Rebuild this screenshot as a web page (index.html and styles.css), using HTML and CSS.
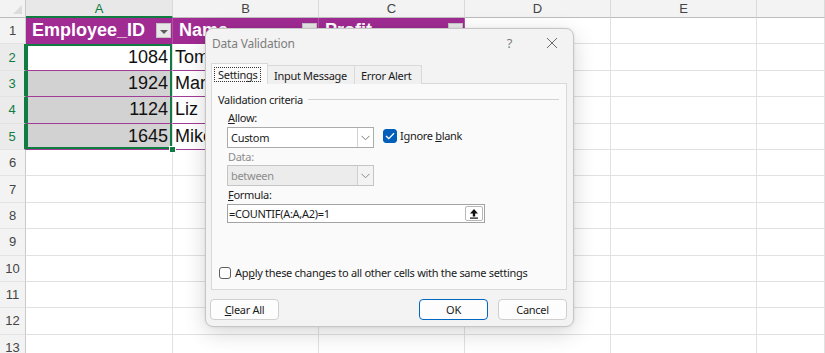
FILE: index.html
```html
<!DOCTYPE html>
<html lang="en">

<head>
    <meta charset="UTF-8">
    <meta name="viewport" content="width=device-width, initial-scale=1.0">
    <title>Data Validation</title>
    <link rel="stylesheet" href="styles.css">
</head>

<body>
    <div class="sheet">
        <div class="corner"></div>
        <div class="colhead active">A</div>
        <div class="colhead">B</div>
        <div class="colhead">C</div>
        <div class="colhead">D</div>
        <div class="colhead">E</div>
        <div class="colhead last"></div>

        <div class="rowhead">1</div>
        <div class="cell th"><span>Employee_ID</span><span class="filter"></span></div>
        <div class="cell th"><span>Name</span><span class="filter"></span></div>
        <div class="cell th"><span>Profit</span><span class="filter"></span></div>
        <div class="cell"></div>
        <div class="cell"></div>
        <div class="cell"></div>

        <div class="rowhead sel">2</div>
        <div class="cell tb num pick first">1084</div>
        <div class="cell tb">Tom</div>
        <div class="cell tb"></div>
        <div class="cell"></div>
        <div class="cell"></div>
        <div class="cell"></div>

        <div class="rowhead sel">3</div>
        <div class="cell tb num pick shade">1924</div>
        <div class="cell tb">Mary</div>
        <div class="cell tb"></div>
        <div class="cell"></div>
        <div class="cell"></div>
        <div class="cell"></div>

        <div class="rowhead sel">4</div>
        <div class="cell tb num pick shade">1124</div>
        <div class="cell tb">Liz</div>
        <div class="cell tb"></div>
        <div class="cell"></div>
        <div class="cell"></div>
        <div class="cell"></div>

        <div class="rowhead sel">5</div>
        <div class="cell tb num pick shade end">1645<span class="handle"></span></div>
        <div class="cell tb">Mike</div>
        <div class="cell tb"></div>
        <div class="cell"></div>
        <div class="cell"></div>
        <div class="cell"></div>

        <div class="rowhead">6</div>
        <div class="cell"></div><div class="cell"></div><div class="cell"></div>
        <div class="cell"></div><div class="cell"></div><div class="cell"></div>
        <div class="rowhead">7</div>
        <div class="cell"></div><div class="cell"></div><div class="cell"></div>
        <div class="cell"></div><div class="cell"></div><div class="cell"></div>
        <div class="rowhead">8</div>
        <div class="cell"></div><div class="cell"></div><div class="cell"></div>
        <div class="cell"></div><div class="cell"></div><div class="cell"></div>
        <div class="rowhead">9</div>
        <div class="cell"></div><div class="cell"></div><div class="cell"></div>
        <div class="cell"></div><div class="cell"></div><div class="cell"></div>
        <div class="rowhead">10</div>
        <div class="cell"></div><div class="cell"></div><div class="cell"></div>
        <div class="cell"></div><div class="cell"></div><div class="cell"></div>
        <div class="rowhead">11</div>
        <div class="cell"></div><div class="cell"></div><div class="cell"></div>
        <div class="cell"></div><div class="cell"></div><div class="cell"></div>
        <div class="rowhead">12</div>
        <div class="cell"></div><div class="cell"></div><div class="cell"></div>
        <div class="cell"></div><div class="cell"></div><div class="cell"></div>
        <div class="rowhead">13</div>
        <div class="cell"></div><div class="cell"></div><div class="cell"></div>
        <div class="cell"></div><div class="cell"></div><div class="cell"></div>
    </div>

    <div class="dialog">
        <div class="titlebar">
            <span class="title">Data Validation</span>
            <span class="help">?</span>
            <svg class="close" width="12" height="12" viewBox="0 0 12 12">
                <path d="M1 1L11 11M11 1L1 11" stroke="#6b6b6b" stroke-width="1" fill="none" />
            </svg>
        </div>

        <div class="tabs">
            <div class="tab current"><span class="focus">Settings</span></div>
            <div class="tab">Input Message</div>
            <div class="tab">Error Alert</div>
        </div>

        <div class="panel">
            <div class="legend"><span>Validation criteria</span><span class="rule"></span></div>
            <div class="group">
                <div class="label"><u>A</u>llow:</div>
                <div class="allow-row">
                    <div class="combo">
                        <span class="value">Custom</span>
                        <span class="arrow">
                            <svg width="9" height="6" viewBox="0 0 9 6">
                                <path d="M0.5 0.8L4.5 4.8L8.5 0.8" stroke="#7a7a7a" fill="none" />
                            </svg>
                        </span>
                    </div>
                    <div class="check">
                        <span class="box checked">
                            <svg width="10" height="8" viewBox="0 0 10 8">
                                <path d="M1 4L3.8 6.6L9 1.2" stroke="#fff" stroke-width="1.3" fill="none" />
                            </svg>
                        </span>
                        <span>Ignore <u>b</u>lank</span>
                    </div>
                </div>
                <div class="label muted">Data:</div>
                <div class="combo disabled">
                    <span class="value">between</span>
                    <span class="arrow">
                        <svg width="9" height="6" viewBox="0 0 9 6">
                            <path d="M0.5 0.8L4.5 4.8L8.5 0.8" stroke="#8a8a8a" fill="none" />
                        </svg>
                    </span>
                </div>
                <div class="label tight"><u>F</u>ormula:</div>
                <div class="formula">
                    <span class="value">=COUNTIF(A:A,A2)=1</span>
                    <span class="collapse">
                        <svg width="10" height="11" viewBox="0 0 10 11">
                            <path d="M5 1L9 5.5H6.2V8.5H3.8V5.5H1Z" fill="#111" />
                            <rect x="1" y="9.5" width="8" height="1.2" fill="#111" />
                        </svg>
                    </span>
                </div>
            </div>
            <div class="apply">
                <span class="box"></span>
                <span>Ap<u>p</u>ly these changes to all other cells with the same settings</span>
            </div>
        </div>

        <div class="footer">
            <button class="btn"><u>C</u>lear All</button>
            <button class="btn ok">OK</button>
            <button class="btn">Cancel</button>
        </div>
    </div>
</body>

</html>
```

FILE: styles.css
```css
* {
    box-sizing: border-box;
}

body {
    margin: 0;
    position: relative;
    width: 825px;
    height: 353px;
    overflow: hidden;
    background-color: #ffffff;
    font-family: "Liberation Sans", Arial, sans-serif;
}

/* spreadsheet */

.sheet {
    display: grid;
    grid-template-columns: 26px 147px 146px 146px 146px 146px 1fr;
    grid-template-rows: 18px repeat(13, 26.4px);
}

.corner {
    position: relative;
    background-color: #f3f3f3;
    border-right: 1px solid #c9c9c9;
    border-bottom: 1px solid #bdbdbd;
}

.corner::after {
    content: "";
    position: absolute;
    right: 3px;
    bottom: 3px;
    border-left: 9px solid transparent;
    border-bottom: 9px solid #dcdcdc;
}

.colhead {
    background-color: #f3f3f3;
    border-right: 1px solid #dadada;
    border-bottom: 1px solid #bdbdbd;
    color: #444;
    font-size: 13px;
    line-height: 17px;
    text-align: center;
}

.colhead.active {
    background-color: #e8e8e8;
    color: #107c41;
    border-bottom: 2px solid #107c41;
}

.rowhead {
    background-color: #f3f3f3;
    border-right: 1px solid #c9c9c9;
    border-bottom: 1px solid #e3e3e3;
    color: #444;
    font-size: 13px;
    display: flex;
    align-items: center;
    justify-content: center;
}

.rowhead.sel {
    background-color: #ebebeb;
    color: #107c41;
    border-right: 2px solid #107c41;
}

.cell {
    position: relative;
    border-right: 1px solid #e1e1e1;
    border-bottom: 1px solid #e1e1e1;
    font-size: 18px;
    color: #111;
    display: flex;
    align-items: center;
    padding: 0 2px;
}

.cell.th {
    background-color: #a02b93;
    border-right-color: #b552aa;
    border-bottom-color: #a02b93;
    color: #ffffff;
    font-weight: bold;
    justify-content: space-between;
    padding: 0 1px 0 6px;
}

.filter {
    width: 15px;
    height: 15px;
    background-color: #e8e8e8;
    border: 1px solid #c4c4c4;
    display: flex;
    align-items: center;
    justify-content: center;
}

.filter::after {
    content: "";
    border-top: 4px solid #5c5c5c;
    border-left: 4px solid transparent;
    border-right: 4px solid transparent;
    margin-top: 2px;
}

.cell.tb {
    border-bottom-color: #a33c97;
}

.cell.num {
    justify-content: flex-end;
    padding-right: 4px;
}

.cell.shade {
    background-color: #d2d2d2;
}

.cell.pick {
    box-shadow: inset 2px 0 0 #107c41, inset -2px 0 0 #107c41;
}

.cell.pick.first {
    box-shadow: inset 2px 0 0 #107c41, inset -2px 0 0 #107c41, inset 0 2px 0 #107c41;
}

.cell.pick.end {
    box-shadow: inset 2px 0 0 #107c41, inset -2px 0 0 #107c41, inset 0 -2px 0 #107c41;
}

.handle {
    position: absolute;
    right: -4px;
    bottom: -4px;
    width: 7px;
    height: 7px;
    background-color: #107c41;
    border: 1px solid #ffffff;
    z-index: 2;
}

/* dialog */

.dialog {
    position: absolute;
    left: 205px;
    top: 28px;
    width: 369px;
    height: 299px;
    background-color: #f3f3f3;
    border: 1px solid #c6c6c6;
    border-radius: 8px;
    box-shadow: 0 6px 22px rgba(0, 0, 0, 0.16), 0 0 3px rgba(0, 0, 0, 0.08);
    font-family: "Noto Sans", sans-serif;
    font-size: 11px;
    letter-spacing: -0.3px;
    color: #1b1b1b;
    display: flex;
    flex-direction: column;
    padding: 0 6px 6px 5px;
}

.titlebar {
    height: 28px;
    display: flex;
    align-items: center;
    padding-left: 1px;
}

.title {
    color: #7d7d7d;
    font-size: 12px;
    letter-spacing: -0.2px;
}

.help {
    margin-left: auto;
    color: #7d7d7d;
    font-size: 13px;
    margin-right: 34px;
}

.close {
    margin-right: 9px;
}

.tabs {
    margin-top: 6px;
    height: 21px;
    display: flex;
    align-items: flex-end;
    margin-bottom: -1px;
    position: relative;
    z-index: 1;
}

.tab {
    height: 19px;
    padding: 0 6px;
    border: 1px solid #d9d9d9;
    border-bottom: none;
    background-color: #f0f0f0;
    display: flex;
    align-items: center;
    margin-left: -1px;
}

.tab:first-child {
    margin-left: 0;
}

.tab:nth-child(2) {
    width: 88px;
}

.tab:nth-child(3) {
    width: 68px;
}

.tab.current {
    height: 21px;
    background-color: #fafafa;
    padding: 0 2px;
    width: 57px;
}

.focus {
    border: 1px dotted #333;
    padding: 0 3px;
    line-height: 13px;
}

.panel {
    height: 207px;
    background-color: #fafafa;
    border: 1px solid #d9d9d9;
    padding: 8px 7px 9px 6px;
    display: flex;
    flex-direction: column;
}

.legend {
    display: flex;
    align-items: center;
    height: 14px;
    gap: 5px;
}

.rule {
    flex: 1;
    height: 1px;
    background-color: #d3d3d3;
}

.group {
    padding-left: 9px;
}

.label {
    height: 14px;
    line-height: 14px;
    margin-top: 5px;
    padding-left: 1px;
}

.label.muted {
    margin-top: 2px;
    color: #8c8c8c;
}

.label.tight {
    margin-top: 2px;
}

.allow-row {
    margin-top: 2px;
    display: flex;
    align-items: flex-start;
    gap: 9px;
}

.combo {
    width: 147px;
    height: 21px;
    background-color: #ffffff;
    border: 1px solid #ababab;
    display: flex;
    align-items: center;
}

.combo.disabled {
    margin-top: 1px;
    background-color: #ececec;
    border-color: #c5c5c5;
    color: #8c8c8c;
}

.value {
    flex: 1;
    padding-left: 3px;
}

.formula .value {
    padding-left: 1px;
}

.arrow {
    width: 16px;
    height: 19px;
    border-left: 1px solid #d2d2d2;
    display: flex;
    align-items: center;
    justify-content: center;
    background-color: #ffffff;
}

.combo.disabled .arrow {
    background-color: #f3f3f3;
    border-left-color: #cfcfcf;
}

.check {
    display: flex;
    align-items: center;
    gap: 3px;
    margin-top: 1px;
}

.box {
    width: 13px;
    height: 13px;
    border: 1px solid #5e5e5e;
    border-radius: 3px;
    background-color: #fdfdfd;
    display: flex;
    align-items: center;
    justify-content: center;
}

.box.checked {
    width: 14px;
    height: 14px;
    background-color: #005fb8;
    border-color: #005fb8;
}

.formula {
    margin-top: 2px;
    width: 258px;
    height: 19px;
    background-color: #ffffff;
    border: 1px solid #a3a3a3;
    display: flex;
    align-items: center;
}

.collapse {
    width: 18px;
    height: 15px;
    margin-right: 1px;
    border: 1px solid #b8b8b8;
    border-radius: 2px;
    background-color: #ffffff;
    display: flex;
    align-items: center;
    justify-content: center;
}

.apply {
    margin-top: auto;
    display: flex;
    align-items: center;
    gap: 4px;
    padding-left: 1px;
}

.apply .box {
    width: 12px;
    height: 12px;
}

.footer {
    margin-top: 9px;
    display: flex;
    gap: 10px;
}

.btn {
    width: 69px;
    height: 21px;
    background-color: #fdfdfd;
    border: 1px solid #cfcfcf;
    border-radius: 4px;
    font-family: "Noto Sans", sans-serif;
    font-size: 11px;
    letter-spacing: -0.3px;
    color: #1b1b1b;
    padding: 0;
}

.btn:first-child {
    margin-right: auto;
    margin-left: -1px;
}

.btn.ok {
    border-color: #0067c0;
}
```
